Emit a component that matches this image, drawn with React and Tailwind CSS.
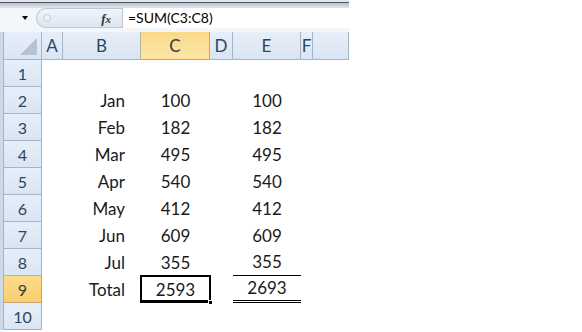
const cols = [
  { key: "A", w: "w-[21px]" },
  { key: "B", w: "w-[78px]" },
  { key: "C", w: "w-[69px]" },
  { key: "D", w: "w-[23px]" },
  { key: "E", w: "w-[68px]" },
  { key: "F", w: "w-[12px]" },
  { key: "", w: "w-[36px]" },
];

const rows = [
  null,
  ["Jan", 100, 100],
  ["Feb", 182, 182],
  ["Mar", 495, 495],
  ["Apr", 540, 540],
  ["May", 412, 412],
  ["Jun", 609, 609],
  ["Jul", 355, 355],
  ["Total", 2593, 2693],
  null,
];

const font = "font-['Lato','Noto_Sans',sans-serif]";

function FormulaBar() {
  return (
    <div className="flex h-[20px] bg-[#f3f6fa]">
      <div className="w-[36px] flex items-center justify-end pr-[8px]">
        <div className="w-0 h-0 border-l-[3px] border-r-[3px] border-t-[4px] border-l-transparent border-r-transparent border-t-black" />
      </div>
      <div className="w-[86px] flex items-center rounded-l-full border border-r-0 border-[#b9c7d8] bg-gradient-to-b from-[#f1f5fa] to-[#dde6f1]">
        <div className="ml-[6px] w-[8px] h-[8px] rounded-full border border-[#c4ccd6] bg-[#eef1f5]" />
        <span className="ml-auto mr-[11px] font-['Liberation_Serif',serif] italic font-bold text-[13px] leading-none text-[#333]">
          f<span className="text-[11px]">x</span>
        </span>
      </div>
      <div className={`w-[227px] bg-white border-l border-[#b9c7d8] pl-[5px] text-[14px] leading-[20px] text-black ${font}`}>
        =SUM(C3:C8)
      </div>
    </div>
  );
}

function ColumnHeader() {
  return (
    <div className="flex h-[28px]">
      {/* select-all corner with its grey triangle */}
      <div className="relative w-[38px] bg-gradient-to-b from-[#e6eef9] to-[#dbe5f2] border-r border-b border-[#9eb6ce]">
        <div className="absolute right-[4px] bottom-[4px] w-0 h-0 border-b-[17px] border-b-[#b4c2d3] border-l-[17px] border-l-transparent" />
      </div>
      {cols.map((c, i) => (
        <div
          key={i}
          className={`${c.w} shrink-0 text-center text-[17px] leading-[28px] border-r border-b ${
            c.key === "C"
              ? "bg-gradient-to-b from-[#f9d98a] to-[#fce7a6] border-[#e2a03f] text-[#3a3a3a]"
              : "bg-gradient-to-b from-[#e6eef9] to-[#dbe5f2] border-[#9eb6ce] text-[#2b4663]"
          }`}
        >
          {c.key}
        </div>
      ))}
    </div>
  );
}

function Row({ n, data }) {
  const total = n === 9;
  return (
    <div className="flex h-[27px] text-[#1a1a1a]">
      <div
        className={`w-[38px] shrink-0 text-center text-[16px] leading-[27px] border-r border-b ${
          total
            ? "bg-gradient-to-b from-[#fbdc8b] to-[#f9cf6d] border-[#e2a03f] text-[#3a3a3a]"
            : "bg-gradient-to-b from-[#e6eef9] to-[#dbe5f2] border-[#9eb6ce] text-[#2b4663]"
        }`}
      >
        {n}
      </div>
      <div className="w-[21px] shrink-0" />
      <div className="w-[78px] shrink-0 text-right pr-[16px] text-[17px] leading-[27px]">
        {data?.[0]}
      </div>
      <div
        className={`relative w-[69px] shrink-0 text-center text-[17px] leading-[27px] ${
          total ? "border-b-[3px] border-double border-black leading-[24px]" : ""
        }`}
      >
        {data?.[1]}
        {total && (
          <>
            <div className="absolute left-[-1px] top-[-1px] right-[-1px] bottom-[-3px] border-2 border-black pointer-events-none" />
            <div className="absolute right-[-3px] bottom-[-5px] w-[5px] h-[5px] bg-black border border-white" />
          </>
        )}
      </div>
      <div className="w-[23px] shrink-0" />
      <div
        className={`w-[68px] shrink-0 text-center text-[17px] ${
          total
            ? "border-b-[3px] border-double border-black leading-[24px]"
            : n === 8
            ? "border-b border-black leading-[26px]"
            : "leading-[27px]"
        }`}
      >
        {data?.[2]}
      </div>
    </div>
  );
}

export default function App() {
  return (
    <div className={`w-[582px] h-[332px] overflow-hidden bg-white text-black ${font}`}>
      <div className="w-[349px]">
        <div className="h-[3px] bg-[#e2e6ec] border-b border-[#555]" />
        <div className="h-[5px] bg-gradient-to-b from-[#b7c4d5] to-[#dfe6ef]" />
        <FormulaBar />
        <div className="h-[4px] bg-[#f3f6fa]" />
        <div className="flex">
          <div className="w-[4px] shrink-0 bg-[#cfd9e6] border-r border-[#9eb6ce]" />
          <div className="flex-1">
            <ColumnHeader />
            {rows.map((r, i) => (
              <Row key={i} n={i + 1} data={r} />
            ))}
          </div>
        </div>
      </div>
    </div>
  );
}
